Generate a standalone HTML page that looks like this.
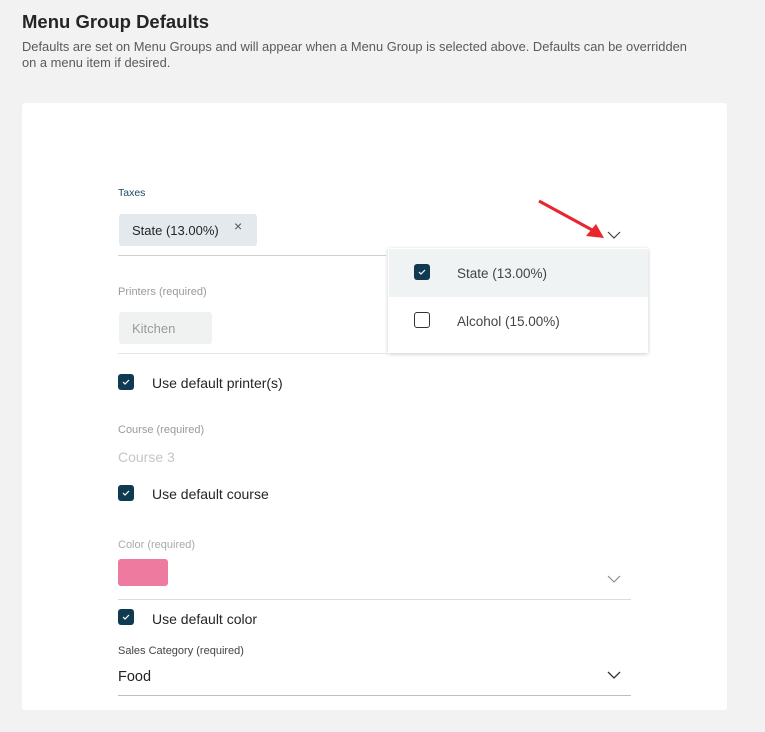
<!DOCTYPE html>
<html><head><style>
body{margin:0;width:765px;height:732px;background:#f2f2f2;font-family:"Liberation Sans",sans-serif;position:relative;overflow:hidden;color:#252525}
.a{position:absolute;white-space:nowrap}
.card{position:absolute;left:22px;top:103px;width:705px;height:607px;background:#fff;border-radius:3px}
.lbl{font-size:11px;color:#9a9a9a}
.cb{position:absolute;width:16px;height:16px;background:#0f3a52;border-radius:3px}
.cb svg{position:absolute;left:3px;top:3px}
.line{position:absolute;height:1px;background:#d6d6d6}
.t{font-size:14px;color:#252525}
</style></head><body>
<div class="a" style="left:22px;top:11px;font-size:18.5px;font-weight:bold;color:#252525">Menu Group Defaults</div>
<div class="a" style="left:22px;top:39px;font-size:12.9px;color:#5a5a5a;line-height:16px">Defaults are set on Menu Groups and will appear when a Menu Group is selected above. Defaults can be overridden<br>on a menu item if desired.</div>
<div class="card"></div>

<div class="a" style="left:118px;top:187px;font-size:10.5px;color:#1d4a63">Taxes</div>
<div class="a" style="left:119px;top:214px;width:138px;height:32px;background:#e3e9ed;border-radius:3px"></div>
<div class="a t" style="left:132px;top:223px;font-size:13px">State (13.00%)</div>
<div class="a" style="left:234px;top:218px;font-size:14px;color:#555">×</div>
<div class="line" style="left:118px;top:255px;width:268px;background:#cfcfcf"></div>
<svg class="a" style="left:536px;top:198px" width="70" height="42"><line x1="3" y1="3" x2="58" y2="33" stroke="#e8262e" stroke-width="3"/><polygon points="68,40 50,38 60,26" fill="#e8262e"/></svg>
<svg class="a" style="left:607px;top:230px" width="15" height="10"><polyline points="1,2 7,8 13,2" fill="none" stroke="#444" stroke-width="1.2"/></svg>

<div class="a" style="left:388px;top:248px;width:260px;height:105px;background:#fff;box-shadow:0 1px 4px rgba(0,0,0,.2)"></div>
<div class="a" style="left:389px;top:249px;width:259px;height:48px;background:#eff3f3"></div>
<div class="cb" style="left:414px;top:264px"><svg width="10" height="10"><polyline points="2,5 4,7 8,3" fill="none" stroke="#fff" stroke-width="1.2"/></svg></div>
<div class="a t" style="left:457px;top:266px;font-size:13.5px;color:#444">State (13.00%)</div>
<div class="a" style="left:414px;top:312px;width:14px;height:14px;border:1.3px solid #333;border-radius:3px"></div>
<div class="a t" style="left:457px;top:314px;font-size:13.5px;color:#444">Alcohol (15.00%)</div>

<div class="a lbl" style="left:118px;top:286px">Printers (required)</div>
<div class="a" style="left:119px;top:312px;width:93px;height:32px;background:#f0f2f2;border-radius:3px"></div>
<div class="a" style="left:132px;top:321px;font-size:13px;color:#9a9a9a">Kitchen</div>
<div class="line" style="left:118px;top:353px;width:270px;background:#e6e6e6"></div>

<div class="cb" style="left:118px;top:374px"><svg width="10" height="10"><polyline points="2,5 4,7 8,3" fill="none" stroke="#fff" stroke-width="1.2"/></svg></div>
<div class="a t" style="left:152px;top:375px">Use default printer(s)</div>

<div class="a lbl" style="left:118px;top:424px">Course (required)</div>
<div class="a" style="left:118px;top:449px;font-size:14px;color:#c6c6c6">Course 3</div>
<div class="cb" style="left:118px;top:485px"><svg width="10" height="10"><polyline points="2,5 4,7 8,3" fill="none" stroke="#fff" stroke-width="1.2"/></svg></div>
<div class="a t" style="left:152px;top:486px">Use default course</div>

<div class="a lbl" style="left:118px;top:539px;color:#aaa">Color (required)</div>
<div class="a" style="left:118px;top:559px;width:50px;height:27px;background:#ef7aa0;border-radius:3px"></div>
<svg class="a" style="left:607px;top:574px" width="15" height="10"><polyline points="1,2 7,8 13,2" fill="none" stroke="#888" stroke-width="1.1"/></svg>
<div class="line" style="left:118px;top:599px;width:513px;background:#dcdcdc"></div>

<div class="cb" style="left:118px;top:609px"><svg width="10" height="10"><polyline points="2,5 4,7 8,3" fill="none" stroke="#fff" stroke-width="1.2"/></svg></div>
<div class="a t" style="left:152px;top:611px">Use default color</div>

<div class="a" style="left:118px;top:645px;font-size:11px;color:#444">Sales Category (required)</div>
<div class="a" style="left:118px;top:669px;font-size:14.5px;color:#222">Food</div>
<svg class="a" style="left:607px;top:670px" width="15" height="10"><polyline points="1,2 7,8 13,2" fill="none" stroke="#333" stroke-width="1.3"/></svg>
<div class="line" style="left:118px;top:695px;width:513px;background:#bdbdbd"></div>
</body></html>
